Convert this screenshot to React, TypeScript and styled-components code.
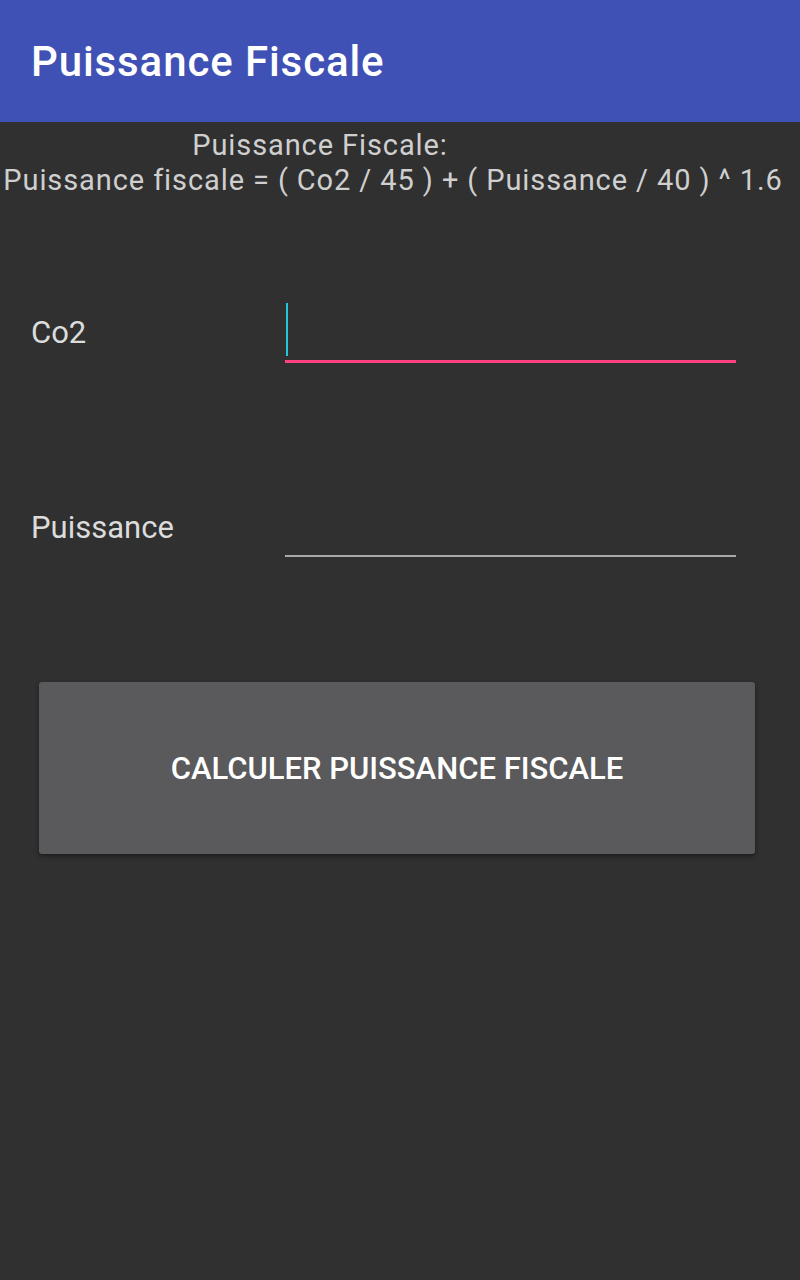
import styled, { createGlobalStyle } from "styled-components";

const GlobalStyle = createGlobalStyle`
  html, body {
    margin: 0;
    padding: 0;
    background: #303030;
  }
  body {
    font-family: Roboto, "Noto Sans", sans-serif;
  }
`;

const Screen = styled.div`
  width: 800px;
  height: 1280px;
  background: #303030;
  display: flex;
  flex-direction: column;
`;

const AppBar = styled.header`
  height: 122px;
  background: #3f51b5;
  display: flex;
  align-items: center;
  padding-left: 31px;
  box-sizing: border-box;
`;

const Title = styled.h1`
  margin: 0;
  color: #ffffff;
  font-size: 42px;
  font-weight: 500;
  letter-spacing: 0.9px;
`;

const Formula = styled.div`
  margin-top: 6px;
  color: #cfcfcf;
  font-size: 29px;
  line-height: 35px;
  letter-spacing: 0.9px;
  text-align: center;
`;

const FormulaLine = styled.div<{ $shift?: number }>`
  padding-right: ${(p) => p.$shift ?? 0}px;
  white-space: nowrap;
`;

const Form = styled.div`
  margin-top: 100px;
  display: flex;
  flex-direction: column;
  gap: 130px;
`;

const Row = styled.div`
  display: grid;
  grid-template-columns: 254px 451px;
  padding-left: 31px;
  align-items: center;
`;

const Label = styled.label`
  color: #dcdcdc;
  font-size: 31px;
  padding-top: 4px;
`;

const Field = styled.div<{ $focused?: boolean }>`
  height: 62px;
  border-bottom: ${(p) => (p.$focused ? "3px solid #ff4081" : "2px solid #a8a8a8")};
  position: relative;
`;

const Caret = styled.span`
  position: absolute;
  left: 1px;
  top: 5px;
  width: 2px;
  height: 53px;
  background: #26c6da;
`;

const Button = styled.button`
  margin: 125px 45px 0 39px;
  height: 172px;
  background: #5a5a5c;
  border: none;
  border-radius: 3px;
  box-shadow: 0 2px 4px rgba(0, 0, 0, 0.45);
  color: #ffffff;
  font-family: Roboto, "Noto Sans", sans-serif;
  font-size: 31px;
  font-weight: 500;
  text-transform: uppercase;
  padding: 0;
`;

export default function App() {
  return (
    <>
      <GlobalStyle />
      <Screen>
        <AppBar>
          <Title>Puissance Fiscale</Title>
        </AppBar>
        <Formula>
          <FormulaLine $shift={160}>Puissance Fiscale:</FormulaLine>
          <FormulaLine $shift={14}>Puissance fiscale = ( Co2 / 45 ) + ( Puissance / 40 ) ^ 1.6</FormulaLine>
        </Formula>
        <Form>
          <Row>
            <Label>Co2</Label>
            <Field $focused>
              <Caret />
            </Field>
          </Row>
          <Row>
            <Label>Puissance</Label>
            <Field />
          </Row>
        </Form>
        <Button>Calculer puissance fiscale</Button>
      </Screen>
    </>
  );
}
